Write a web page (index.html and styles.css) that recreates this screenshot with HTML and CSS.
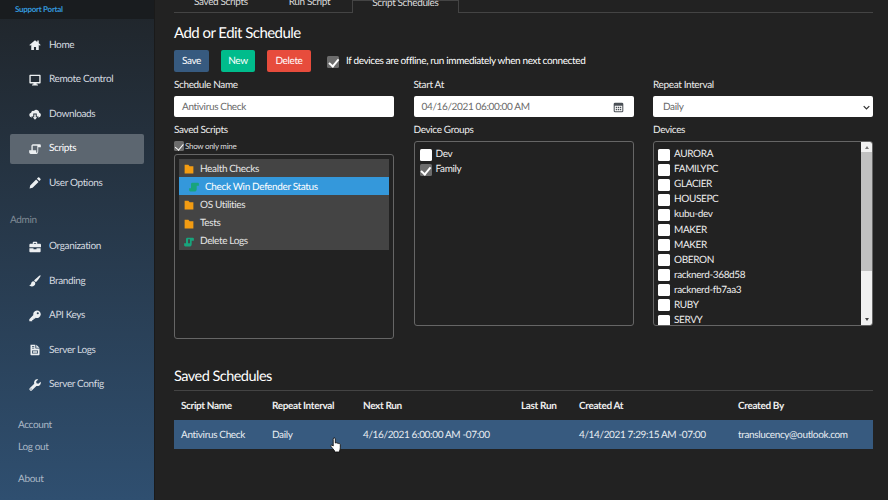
FILE: index.html
```html
<!DOCTYPE html>
<html lang="en">
<head>
<meta charset="utf-8">
<title>Script Schedules</title>
<link rel="stylesheet" href="styles.css">
</head>
<body>
<div class="app">
  <aside class="sidebar">
    <div class="brand"><a class="portal">Support Portal</a></div>
    <nav class="nav">
      <a class="nav-item"><svg class="nav-icon" viewBox="0 0 16 16"><path d="M8 1.500 .5 8l1 1.100L3 7.800V14.500h3.600v-4h2.800v4H13V7.800l1.500 1.300 1-1.100-2.500-2.200V2h-2v2L8 1.500z"/></svg>Home</a>
      <a class="nav-item"><svg class="nav-icon" viewBox="0 0 16 16"><path fill-rule="evenodd" d="M1.500 1h13a1 1 0 0 1 1 1v9.500a1 1 0 0 1-1 1H10l.4 1.500h1.600v1.300H4V14h1.600L6 12.500H1.500a1 1 0 0 1-1-1V2a1 1 0 0 1 1-1zM2.300 2.800V10.700h11.400V2.800z"/></svg>Remote Control</a>
      <a class="nav-item"><svg class="nav-icon" viewBox="0 0 16 16"><path d="M4 12.500H3.500A3.200 3.200 0 0 1 2.800 6.200 3 3 0 0 1 6.600 4 4 4 0 0 1 13.700 6.300 3.200 3.200 0 0 1 13 12.500h-1l1-1.200H10.300V7.200H5.700v4.100H3z"/><path d="M7 8.500h2v3.800h2L8 15.500 5 12.300h2z"/></svg>Downloads</a>
      <a class="nav-item active"><svg class="nav-icon" viewBox="0 0 16 16"><path d="M6 1.500h8.300a1.600 1.600 0 0 1 1.500 1.700V5.600h-3.500V11c0 2-1 3.500-2.500 3.500H2.300C1 14.500.2 13.500.2 12V9.800h3V3.500C3.200 2.300 4.500 1.500 6 1.500zM5 3.700V9.800h4.600V12c0 .6.200 1 .7 1 .6 0 .8-.7.800-1.500V3.700z"/></svg>Scripts</a>
      <a class="nav-item"><svg class="nav-icon" viewBox="0 0 16 16"><path d="M9.500 3.300 12.700 6.500 4.800 14.400 .8 15.200 1.600 11.200zM10.600 2.200 12 .8a1.200 1.200 0 0 1 1.700 0l1.500 1.500a1.200 1.200 0 0 1 0 1.700l-1.400 1.400z"/></svg>User Options</a>
    </nav>
    <div class="section-title">Admin</div>
    <nav class="nav">
      <a class="nav-item"><svg class="nav-icon" viewBox="0 0 16 16"><path fill-rule="evenodd" d="M5 3.500V2.300C5 1.600 5.600 1 6.300 1h3.400c.7 0 1.300.6 1.300 1.300v1.200h3.500c.8 0 1.500.7 1.500 1.500v3.300H.5V5c0-.8.700-1.500 1.500-1.500zM6.500 2.500v1h3v-1zM.5 9.500H6V11h4V9.500h5.500V13.500c0 .8-.7 1.500-1.500 1.500H2c-.8 0-1.500-.7-1.500-1.500z"/></svg>Organization</a>
      <a class="nav-item"><svg class="nav-icon" viewBox="0 0 16 16"><path d="M14.300.6c.7-.5 1.500.3 1 1C14 3.800 11 8 9.200 9.700L6.700 7.400C8.500 5.400 12.200 2 14.300.6zM5.700 8.300c1.300.1 2.600 1.200 2.700 2.700 0 2.800-2.300 4.200-4.600 4.200C2.300 15.200.7 14.300.3 13.300c1.300 0 2.200-.6 2.500-1.800.3-1.700 1.300-3.200 2.900-3.200z"/></svg>Branding</a>
      <a class="nav-item"><svg class="nav-icon" viewBox="0 0 16 16"><path fill-rule="evenodd" d="M10.500.6a5 5 0 1 1-1.500 9.700L7.700 11.600H6v1.700H4.300V15H.9a.5.500 0 0 1-.5-.5v-2.300L5.800 6.800A5 5 0 0 1 10.500.6zM11.700 3a1.400 1.400 0 1 0 0 2.800 1.400 1.400 0 0 0 0-2.800z"/></svg>API Keys</a>
      <a class="nav-item"><svg class="nav-icon" viewBox="0 0 16 16"><path fill-rule="evenodd" d="M2 1h6.500v4.300c0 .4.300.7.700.7H14v8c0 .6-.4 1-1 1H3c-.6 0-1-.4-1-1zM9.700 1 14 4.900H9.700zM4 3v1h3V3zM4 5v1h3V5zM4 8.500v4h8v-4zM5 9.500h6v2H5z"/></svg>Server Logs</a>
      <a class="nav-item"><svg class="nav-icon" viewBox="0 0 16 16"><path fill-rule="evenodd" d="M15.600 3.800c.5 2-.2 3.900-1.700 4.900-1.200.8-2.700 1-4 .5l-5.800 5.800a2 2 0 0 1-2.900-2.900l5.800-5.800c-.5-1.300-.3-2.800.5-4C8.500.8 10.500.1 12.300.6L9.500 3.400l.5 2.400 2.400.5zM2.700 12.500a.8.800 0 1 0 0 1.600.8.800 0 0 0 0-1.600z"/></svg>Server Config</a>
    </nav>
    <div class="side-links">
      <a class="side-link">Account</a>
      <a class="side-link">Log out</a>
      <a class="side-link about">About</a>
    </div>
  </aside>

  <main class="main">
    <div class="tabs">
      <a class="tab">Saved Scripts</a>
      <a class="tab">Run Script</a>
      <a class="tab tab-active">Script Schedules</a>
    </div>

    <h3 class="page-title">Add or Edit Schedule</h3>

    <div class="actions">
      <button class="btn btn-save">Save</button>
      <button class="btn btn-new">New</button>
      <button class="btn btn-delete">Delete</button>
      <label class="offline"><span class="check check-big checked"></span>If devices are offline, run immediately when next connected</label>
    </div>

    <div class="form-grid">
      <div class="field">
        <label class="label">Schedule Name</label>
        <div class="input">Antivirus Check</div>
        <label class="label label-gap">Saved Scripts</label>
        <label class="mine"><span class="check check-small checked"></span>Show only mine</label>
        <div class="box box-tree">
          <ul class="tree">
            <li class="tree-row"><svg class="tree-icon folder" viewBox="0 0 16 16"><path d="M1 1h6l2 2.500h6V15H1z"/></svg>Health Checks</li>
            <li class="tree-row selected"><svg class="tree-icon script" viewBox="0 0 16 16"><path d="M6 1h8.300a1.600 1.600 0 0 1 1.500 1.700V6h-3.500V11.500c0 2-1 3.500-2.500 3.500H2.300C1 15 .2 14 .2 12.500V9.800h3V3C3.200 1.800 4.500 1 6 1z"/></svg>Check Win Defender Status</li>
            <li class="tree-row"><svg class="tree-icon folder" viewBox="0 0 16 16"><path d="M1 1h6l2 2.500h6V15H1z"/></svg>OS Utilities</li>
            <li class="tree-row"><svg class="tree-icon folder" viewBox="0 0 16 16"><path d="M1 1h6l2 2.500h6V15H1z"/></svg>Tests</li>
            <li class="tree-row"><svg class="tree-icon script" viewBox="0 0 16 16"><path d="M6 1h8.300a1.600 1.600 0 0 1 1.500 1.700V6h-3.500V11.500c0 2-1 3.500-2.500 3.500H2.300C1 15 .2 14 .2 12.500V9.800h3V3C3.200 1.800 4.500 1 6 1zM6.500 3.500V9.800h3V3.500z"/></svg>Delete Logs</li>
          </ul>
        </div>
      </div>

      <div class="field">
        <label class="label">Start At</label>
        <div class="input input-date">04/16/2021 06:00:00 AM
          <svg class="cal" viewBox="0 0 16 16"><path fill-rule="evenodd" d="M3 1h10a2 2 0 0 1 2 2v10a2 2 0 0 1-2 2H3a2 2 0 0 1-2-2V3a2 2 0 0 1 2-2zM2.500 5.500V13c0 .3.200.5.500.5h10c.3 0 .5-.2.500-.5V5.500zM4 7h2v2H4zM7 7h2v2H7zM10 7h2v2h-2zM4 10h2v2H4zM7 10h2v2H7zM10 10h2v2h-2z"/></svg>
        </div>
        <label class="label label-gap">Device Groups</label>
        <div class="box box-list">
          <label class="check-row"><span class="check"></span>Dev</label>
          <label class="check-row"><span class="check checked"></span>Family</label>
        </div>
      </div>

      <div class="field">
        <label class="label">Repeat Interval</label>
        <div class="input input-select">Daily
          <svg class="chev" viewBox="0 0 10 6"><path d="M1 1l4 4 4-4" fill="none" stroke="#333" stroke-width="1.800"/></svg>
        </div>
        <label class="label label-gap">Devices</label>
        <div class="box box-list box-devices">
          <div class="device-list">
            <label class="check-row"><span class="check"></span>AURORA</label>
            <label class="check-row"><span class="check"></span>FAMILYPC</label>
            <label class="check-row"><span class="check"></span>GLACIER</label>
            <label class="check-row"><span class="check"></span>HOUSEPC</label>
            <label class="check-row"><span class="check"></span>kubu-dev</label>
            <label class="check-row"><span class="check"></span>MAKER</label>
            <label class="check-row"><span class="check"></span>MAKER</label>
            <label class="check-row"><span class="check"></span>OBERON</label>
            <label class="check-row"><span class="check"></span>racknerd-368d58</label>
            <label class="check-row"><span class="check"></span>racknerd-fb7aa3</label>
            <label class="check-row"><span class="check"></span>RUBY</label>
            <label class="check-row"><span class="check"></span>SERVY</label>
          </div>
          <div class="scrollbar">
            <span class="arrow arrow-up"></span>
            <div class="track"><div class="thumb"></div></div>
            <span class="arrow arrow-down"></span>
          </div>
        </div>
      </div>
    </div>

    <h4 class="section-head">Saved Schedules</h4>
    <table class="table">
      <thead>
        <tr>
          <th class="c1">Script Name</th>
          <th class="c2">Repeat Interval</th>
          <th class="c3">Next Run</th>
          <th class="c4">Last Run</th>
          <th class="c5">Created At</th>
          <th class="c6">Created By</th>
        </tr>
      </thead>
      <tbody>
        <tr class="row-active">
          <td>Antivirus Check</td>
          <td>Daily</td>
          <td>4/16/2021 6:00:00 AM -07:00</td>
          <td></td>
          <td>4/14/2021 7:29:15 AM -07:00</td>
          <td>translucency@outlook.com</td>
        </tr>
      </tbody>
    </table>
  </main>
</div>
<svg class="cursor" viewBox="0 0 12 16"><path d="M3.500 1.200c.7-.6 1.700-.2 1.800.8v4l.4-.1c.6-.3 1.200-.1 1.500.3.600-.3 1.200-.1 1.500.4.700-.2 1.500.2 1.600 1v3.300c0 1-.3 1.800-.7 2.600v1.500H4.500v-1.300C3.500 12.400 2.200 11 1 9.500.5 8.800 1.200 7.800 2.100 8.200l1.100.8V2.300c0-.4.100-.8.300-1.100z" fill="#fff" stroke="#111" stroke-width=".9"/></svg>
</body>
</html>
```
FILE: styles.css
```css
* { box-sizing: border-box; letter-spacing: -.036em; }
html, body { margin: 0; height: 100%; overflow: hidden; }
body {
  background: #222;
  color: #fff;
  font-family: Lato, "Liberation Sans", sans-serif;
  font-size: 10px;
  line-height: 15px;
  text-rendering: geometricPrecision;
}
.app { display: flex; height: 500px; }

/* Sidebar */
.sidebar {
  width: 154px;
  flex: none;
  background: linear-gradient(180deg, #20252a 0%, #2f4f70 100%);
  display: flex;
  flex-direction: column;
}
.brand {
  height: 19px;
  background: #191c1f;
  padding: 2px 0 0 15px;
}
.portal { color: #3498db; font-size: 8px; font-weight: 700; line-height: 14px; display: block; }
.nav { display: flex; flex-direction: column; padding: 0 10px; }
.sidebar > .brand + .nav { margin-top: 11px; }
.nav-item {
  height: 30px;
  margin-bottom: 4.5px;
  border-radius: 2px;
  display: flex;
  align-items: center;
  padding-left: 19px;
  color: #d6dbe0;
}
.nav-item.active { background: #5c6670; color: #fff; }
.nav-icon { width: 12px; height: 12px; margin-right: 8px; fill: #eceff1; flex: none; }
.section-title { color: #7f8a95; margin: 10px 0 4px 10px; line-height: 15px; }
.side-links { display: flex; flex-direction: column; padding: 0 0 0 18px; margin-top: 14px; }
.side-link { color: #aab8c6; line-height: 15px; margin-bottom: 7px; }
.side-link.about { margin-top: 10px; }

/* Main */
.main {
  flex: 1;
  min-width: 0;
  border-left: 1px solid #1a1a1a;
  padding: 0 15px 0 19px;
  overflow: hidden;
}
.tabs {
  display: flex;
  height: 13px;
  border-bottom: 1px solid #444;
}
.tab {
  height: 13px;
  flex: none;
  padding: 0 19px;
  margin-right: 3px;
  text-align: center;
  color: #dcdcdc;
  line-height: 5px;
}
.tab-active {
  border: 1px solid #444;
  border-bottom: 0;
  background: #222;
}
.tabs .tab:first-child { margin-left: 1px; }
.page-title { font-size: 15px; font-weight: 400; line-height: 20px; margin: 10px 0 7px; }
.actions { display: flex; align-items: center; height: 22px; }
.btn {
  height: 22px;
  border: 0;
  border-radius: 2px;
  color: #fff;
  font: inherit;
  padding: 1px 0 0;
  margin-right: 12px;
  text-rendering: geometricPrecision;
}
.btn-save { background: #375a7f; width: 35px; }
.btn-new { background: #00bc8c; width: 34px; }
.btn-delete { background: #e74c3c; width: 44px; }
.offline { display: flex; align-items: center; margin-left: 4px; padding-top: 1px; }

.check {
  width: 12px;
  height: 12px;
  flex: none;
  border-radius: 1.500px;
  background: #fff;
  display: block;
  position: relative;
}
.check.checked { background: #6c6c6c; }
.check.checked::after {
  content: "";
  position: absolute;
  left: 3.800px;
  top: 1.200px;
  width: 4px;
  height: 7.500px;
  border: solid #fff;
  border-width: 0 2px 2px 0;
  transform: rotate(40deg);
}
.check-big { margin-right: 7px; }
.check-small { width: 10px; height: 10px; margin-right: 1px; }
.check-small.checked::after { left: 3px; top: .5px; width: 3.500px; height: 6.500px; border-width: 0 1.500px 1.500px 0; }

.form-grid {
  display: grid;
  grid-template-columns: repeat(3, 220px);
  column-gap: 19.500px;
  margin-top: 6px;
}
.field { display: flex; flex-direction: column; min-width: 0; }
.label { display: block; line-height: 15px; margin-bottom: 3px; color: #eee; }
.label-gap { margin-top: 6px; margin-bottom: 3px; }
.input {
  height: 21px;
  background: #fff;
  border-radius: 2px;
  color: #6a6a6a;
  padding: 1px 8px 0;
  display: flex;
  align-items: center;
  justify-content: space-between;
}
.input-select { padding-right: 2px; padding-left: 10px; }
.cal { width: 11px; height: 11px; fill: #4a4f55; margin-right: 2px; }
.chev { width: 7px; height: 5px; margin-right: 1px; }
.mine { display: flex; align-items: center; font-size: 8px; height: 10px; color: #ddd; margin: 0 0 3px; }
.box {
  border: 1px solid #666;
  border-radius: 3px;
  background: #222;
}
.box-tree { height: 185px; padding: 4px; }
.tree { list-style: none; margin: 0; padding: 0; background: #444; }
.tree-row {
  height: 18.200px;
  display: flex;
  align-items: center;
  padding: 2px 0 0 5px;
  color: #e6e6e6;
}
.tree-row.selected { background: #3498db; color: #fff; padding-left: 10px; }
.tree-icon { width: 10px; height: 10px; margin-right: 6px; flex: none; }
.folder { fill: #f39c12; }
.script { fill: #18a47c; }
.box-list { height: 185px; padding: 5px; }
.check-row { display: flex; align-items: center; height: 15.100px; color: #eee; }
.check-row .check { margin-right: 4px; }
.box-devices { display: flex; padding: 5px 0 0 4px; overflow: hidden; }
.device-list { flex: 1; min-width: 0; }
.scrollbar {
  width: 11px;
  flex: none;
  background: #f1f1f1;
  display: flex;
  flex-direction: column;
  align-items: center;
  margin-top: -5px;
}
.arrow { width: 0; height: 0; flex: none; border-left: 2.500px solid transparent; border-right: 2.500px solid transparent; }
.arrow-up { border-bottom: 3px solid #777; margin: 4px 0 3px; }
.arrow-down { border-top: 3px solid #444; margin: 3px 0 4px; }
.track { flex: 1; width: 100%; }
.thumb { height: 119px; background: #c1c1c1; }

.section-head {
  font-size: 14.500px;
  font-weight: 400;
  line-height: 18px;
  margin: 29px 0 0;
  padding-bottom: 4px;
  border-bottom: 1px solid #444;
}
.table { width: 100%; border-collapse: collapse; table-layout: fixed; }
.table th {
  height: 29px;
  padding: 1px 7px 0;
  text-align: left;
  font-weight: 700;
  color: #eee;
}
.c1, .c2 { width: 91px; }
.c3 { width: 158px; }
.c4 { width: 58px; }
.c5 { width: 159px; }
.table td { height: 29px; padding: 2px 7px 0; color: #e8edf2; }
.row-active { background: #375a7f; }

.cursor {
  position: absolute;
  left: 330px;
  top: 437px;
  width: 12px;
  height: 16px;
}
```
